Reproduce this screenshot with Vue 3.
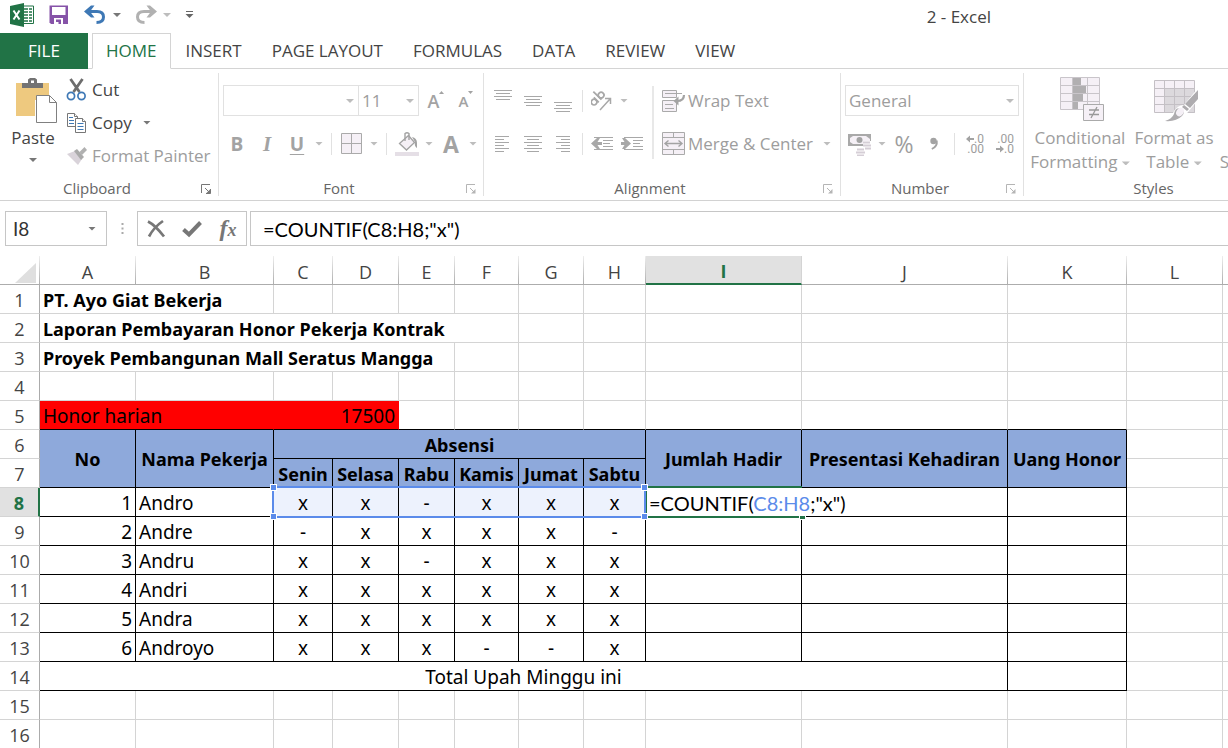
<script setup>
import { ref } from 'vue'

const tabs = ['HOME', 'INSERT', 'PAGE LAYOUT', 'FORMULAS', 'DATA', 'REVIEW', 'VIEW']
const columns = ['A', 'B', 'C', 'D', 'E', 'F', 'G', 'H', 'I', 'J', 'K', 'L', 'M']
const days = ['Senin', 'Selasa', 'Rabu', 'Kamis', 'Jumat', 'Sabtu']
const workers = [
  { row: 8, no: 1, name: 'Andro', marks: ['x', 'x', '-', 'x', 'x', 'x'] },
  { row: 9, no: 2, name: 'Andre', marks: ['-', 'x', 'x', 'x', 'x', '-'] },
  { row: 10, no: 3, name: 'Andru', marks: ['x', 'x', '-', 'x', 'x', 'x'] },
  { row: 11, no: 4, name: 'Andri', marks: ['x', 'x', 'x', 'x', 'x', 'x'] },
  { row: 12, no: 5, name: 'Andra', marks: ['x', 'x', 'x', 'x', 'x', 'x'] },
  { row: 13, no: 6, name: 'Androyo', marks: ['x', 'x', 'x', '-', '-', 'x'] },
]
const cellName = ref('I8')
const formula = ref('=COUNTIF(C8:H8;"x")')
</script>

<template>
  <div class="app">
    <header class="titlebar">
      <svg class="logo" width="24" height="24" viewBox="0 0 24 24" aria-hidden="true">
        <path d="M12 3h11.500v17.500H12z" fill="#fff" stroke="#217346" />
        <path d="M14 6h4M19 6h3M14 9h4M19 9h3M14 12h4M19 12h3M14 15h4M19 15h3M14 18h4M19 18h3" stroke="#217346" stroke-width="1.600" />
        <path d="M0 3L14 0v24L0 21z" fill="#217346" />
        <path d="M3.500 7.500l6 9M9.500 7.500l-6 9" stroke="#fff" stroke-width="2" />
      </svg>
      <button class="quick save" aria-label="Save">
        <svg width="20" height="20" viewBox="0 0 20 20"><path d="M.5.5h18.500v18.500H2L.5 17.500z" fill="#8653a8" /><path d="M3 2h13.500v8H3z" fill="#fff" /><path d="M5 13h9v6H5z" fill="#fff" /><path d="M7 14.500h5V19H9.500v-2H7z" fill="#8653a8" /></svg>
      </button>
      <button class="quick" aria-label="Undo">
        <svg width="22" height="20" viewBox="0 0 22 20"><path d="M3 6.500h10c4.500 0 6.500 2.500 6.500 5.500 0 3.500-2.500 5.500-7 5.500" fill="none" stroke="#3e78b5" stroke-width="3" /><path d="M0 6.500L7 .5h3.500L6 6.500l4.500 6H7z" fill="#3e78b5" /></svg>
      </button>
      <i class="caret dark"></i>
      <button class="quick redo" aria-label="Redo">
        <svg width="22" height="20" viewBox="0 0 22 20"><path d="M19 6.500H9C4.500 6.500 2.500 9 2.500 12c0 3.500 2.500 5.500 7 5.500" fill="none" stroke="#b1b1b1" stroke-width="3" /><path d="M22 6.500L15 .5h-3.500L16 6.500l-4.500 6H15z" fill="#b1b1b1" /></svg>
      </button>
      <i class="caret"></i>
      <button class="quick more" aria-label="Customize toolbar">
        <svg width="9" height="8" viewBox="0 0 9 8"><path d="M1 .5h7" stroke="#666" /><path d="M.5 3h8l-4 4z" fill="#666" /></svg>
      </button>
      <h1>2 - Excel</h1>
    </header>

    <nav class="tabs">
      <button class="file">FILE</button>
      <button v-for="t in tabs" :key="t" class="tab" :class="{ active: t === 'HOME' }">{{ t }}</button>
    </nav>

    <section class="ribbon">
      <div class="group clipboard">
        <div class="body split">
          <button class="paste">
            <svg width="42" height="46" viewBox="0 0 42 46"><path d="M0 5h33v17H19v16H0z" fill="#eec97f" /><path d="M6 10V5h6V1.500L14 0h5l2 1.500V5h6v5z" fill="#737373" /><path d="M15 2.500h3V5h-3z" fill="#fff" /><path d="M20.500 17.500h13l7 7v20h-20z" fill="#fff" stroke="#808080" /><path d="M33.500 17.500v7h7" fill="none" stroke="#808080" /></svg>
            <span>Paste</span><i class="caret dark"></i>
          </button>
          <div class="stack">
            <button class="cmd dark-text"><svg width="22" height="24" viewBox="0 0 22 24"><path d="M4.500 1l9 13M16.500 1l-9 13" stroke="#6d6d6d" stroke-width="2.800" /><circle cx="5" cy="18" r="3.600" fill="none" stroke="#3e78b5" stroke-width="1.700" /><circle cx="15.500" cy="18" r="3.600" fill="none" stroke="#3e78b5" stroke-width="1.700" /></svg>Cut</button>
            <button class="cmd dark-text"><svg width="22" height="22" viewBox="0 0 22 22"><g fill="#fff" stroke="#777"><path d="M1.500 1.500h7l3 3v10h-10z" /><path d="M8.500 1.500v3h3M9.500 6.500h7l3 3v11h-10z" /><path d="M16.500 6.500v3h3" /></g><path d="M3 5.500h4M3 8.500h5M3 11.500h5M11.500 11.500h6M11.500 14.500h6M11.500 17.500h6" stroke="#3e78b5" /></svg>Copy<i class="caret dark"></i></button>
            <button class="cmd"><svg width="22" height="20" viewBox="0 0 22 20"><path d="M1 8l8-3 7 8-4 6z" fill="#d9d3da" /><path d="M8 5l3-2 7 8-3 3z" fill="#aaa" /><path d="M13.500 6l5-5 2.500 3-5 5z" fill="#b1b1b1" /></svg>Format Painter</button>
          </div>
        </div>
        <footer>Clipboard<svg class="launch strong" width="11" height="11" viewBox="0 0 11 11"><path d="M.5 9V.5H9M4 4l4 4M9.500 5v4.500H5" fill="none" stroke="currentColor" /><path d="M9.500 5v4.500H5z" fill="currentColor" /></svg></footer>
      </div>

      <div class="group font">
        <div class="body rows">
          <div class="line combos">
            <label class="combo family"><select aria-label="Font name"><option></option></select><i class="caret"></i></label>
            <label class="combo size"><select aria-label="Font size"><option>11</option></select><i class="caret"></i></label>
            <button class="ib first" aria-label="Increase font size"><span class="letter grow">A</span><svg width="5" height="22" viewBox="0 0 5 22"><path d="M0 4l2.500-3L5 4z" fill="#a3a3a3" /></svg></button>
            <button class="ib" aria-label="Decrease font size"><span class="letter shrink">A</span><svg width="5" height="22" viewBox="0 0 5 22"><path d="M0 1l2.500 3L5 1z" fill="#a3a3a3" /></svg></button>
          </div>
          <div class="line">
            <button class="ib letter">B</button>
            <button class="ib letter italic">I</button>
            <button class="ib letter under">U</button>
            <button class="cr" aria-label="Underline options"><i class="caret"></i></button><i class="sep"></i>
            <button class="ib" aria-label="Borders"><svg width="22" height="22" viewBox="0 0 22 22"><path d="M.5.5h20v20H.5zM10.500.5v20M.5 10.500h20" fill="#f5f0f6" stroke="#aaa" /></svg></button>
            <button class="cr" aria-label="Border options"><i class="caret"></i></button><i class="sep"></i>
            <button class="ib" aria-label="Fill color"><svg width="24" height="24" viewBox="0 0 24 24"><path d="M4.500 11.500l9-8 6 7-8 7.500z" fill="#f5f0f6" stroke="#a3a3a3" stroke-width="1.300" /><path d="M10 9V1.500Q12 0 14 1.500V8" fill="none" stroke="#a3a3a3" stroke-width="1.400" /><path d="M17 5q5 1 5 6v5q-3-2-2-6z" fill="#a3a3a3" /><path d="M0 20h24v4H0z" fill="#e5dfe6" /></svg></button>
            <button class="cr" aria-label="Fill options"><i class="caret"></i></button>
            <button class="ib letter big">A</button>
            <button class="cr" aria-label="Font color options"><i class="caret"></i></button>
          </div>
        </div>
        <footer>Font<svg class="launch" width="11" height="11" viewBox="0 0 11 11"><path d="M.5 9V.5H9M4 4l4 4" fill="none" stroke="currentColor" /><path d="M9.500 5v4.500H5z" fill="currentColor" /></svg></footer>
      </div>

      <div class="group align">
        <div class="body split">
          <div class="rows lead">
            <div class="line">
              <button class="ib" aria-label="Top align"><svg width="20" height="24" viewBox="0 0 20 24"><path d="M1 1.500h18M3 4.500h14M1 7.500h18M3 10.500h14" /></svg></button>
              <button class="ib" aria-label="Middle align"><svg width="20" height="24" viewBox="0 0 20 24"><path d="M1 7.500h18M3 10.500h14M1 13.500h18M3 16.500h14" /></svg></button>
              <button class="ib" aria-label="Bottom align"><svg width="20" height="24" viewBox="0 0 20 24"><path d="M1 13.500h18M3 16.500h14M1 19.500h18M3 22.500h14" /></svg></button>
              <i class="sep"></i>
              <button class="ib" aria-label="Orientation"><svg width="22" height="22" viewBox="0 0 22 22"><g class="thick" transform="rotate(-45 8 10)"><circle cx="3" cy="8" r="2.800" /><path d="M6.200 4.500v7M10 0v11.500" /><circle cx="13" cy="8" r="2.800" /></g><path d="M9 20L19 9M14 8.500h5.500V14" stroke-width="1.500" /></svg></button>
              <button class="cr" aria-label="Orientation options"><i class="caret"></i></button>
            </div>
            <div class="line">
              <button class="ib" aria-label="Align left"><svg width="20" height="18" viewBox="0 0 20 18"><path d="M2 1.500h14M2 4.500h9M2 7.500h14M2 10.500h9M2 13.500h14M2 16.500h9" /></svg></button>
              <button class="ib" aria-label="Center"><svg width="20" height="18" viewBox="0 0 20 18"><path d="M1 1.500h18M4 4.500h12M1 7.500h18M4 10.500h12M1 13.500h18M4 16.500h12" /></svg></button>
              <button class="ib" aria-label="Align right"><svg width="20" height="18" viewBox="0 0 20 18"><path d="M3 1.500h14M8 4.500h9M3 7.500h14M8 10.500h9M3 13.500h14M8 16.500h9" /></svg></button>
              <i class="sep"></i>
              <button class="ib" aria-label="Decrease indent"><svg width="22" height="16" viewBox="0 0 22 16"><path d="M3 1.500h19M12 4.500h10M12 7.500h7M12 10.500h10M3 13.500h19" /><path d="M0 7.500L6 2h3L6.500 6H11v3H6.500L9 13H6z" fill="#a8a8a8" stroke="none" /></svg></button>
              <button class="ib" aria-label="Increase indent"><svg width="22" height="16" viewBox="0 0 22 16"><path d="M3 1.500h19M12 4.500h10M12 7.500h7M12 10.500h10M3 13.500h19" /><path d="M10 7.500L4 2H1l2.500 4H0v3h3.500L1 13h3z" fill="#a8a8a8" stroke="none" /></svg></button>
            </div>
          </div>
          <i class="tall"></i>
          <div class="rows">
            <button class="cmd line"><svg width="24" height="24" viewBox="0 0 24 24"><path d="M.5 1.500h14v7h-14zM.5 11.500h14v11h-14z" fill="#f5f0f6" stroke="#aaa" /><path d="M3 4.500h17M3 15.500h8M3 19.500h9" stroke="#aaa" /><path d="M22 6q0 6-7 6" stroke="#a3a3a3" stroke-width="2.200" /><path d="M11.500 12l5-4.500v9z" fill="#a3a3a3" stroke="none" /></svg>Wrap Text</button>
            <button class="cmd line"><svg width="24" height="24" viewBox="0 0 24 24"><path d="M.5.5h22v22H.5zM.5 5.500h22M.5 17.500h22M11.500.5v5M11.500 17.500v5" fill="#f5f0f6" stroke="#aaa" /><path d="M3 11.500h17M6.500 8.500l-3.500 3 3.500 3M16.500 8.500l3.500 3-3.500 3" stroke="#a3a3a3" stroke-width="1.400" /></svg>Merge &amp; Center<i class="caret"></i></button>
          </div>
        </div>
        <footer>Alignment<svg class="launch" width="11" height="11" viewBox="0 0 11 11"><path d="M.5 9V.5H9M4 4l4 4" fill="none" stroke="currentColor" /><path d="M9.500 5v4.500H5z" fill="currentColor" /></svg></footer>
      </div>

      <div class="group number">
        <div class="body rows">
          <div class="line combos">
            <label class="combo wide"><select aria-label="Number format"><option>General</option></select><i class="caret"></i></label>
          </div>
          <div class="line">
            <button class="ib" aria-label="Accounting format"><svg width="24" height="24" viewBox="0 0 24 24"><path d="M0 2h23v12H0z" fill="#a9a9a9" /><path d="M5 4h13l4 3v3l-3 2H5L2 10V6z" fill="#f5f0f6" /><circle cx="11.500" cy="8" r="3" fill="#a3a3a3" /><path d="M15 9h8v9h-8zM8 16h10v8H8z" fill="#fff" /><path d="M15 10.500h7M15 13.500h8M17 16.500h6M9 17.500h7M8 20.500h9M9 23.500h7" stroke="#d5ced6" stroke-width="2" /></svg></button>
            <button class="cr" aria-label="Accounting options"><i class="caret"></i></button>
            <button class="ib percent">%</button>
            <button class="ib" aria-label="Comma style"><svg width="10" height="14" viewBox="0 0 10 14"><circle cx="4.500" cy="4" r="3.200" fill="#a3a3a3" /><path d="M7.800 3.500q.8 6-5 8.500" fill="none" stroke="#a3a3a3" stroke-width="1.800" /></svg></button>
            <i class="sep"></i>
            <button class="ib dec" aria-label="Increase decimal"><span><svg width="8" height="8" viewBox="0 0 8 8"><path d="M0 4l4-3.500V3h4v2H4v2.500z" fill="#a3a3a3" /></svg>.0</span><span>.00</span></button>
            <button class="ib dec" aria-label="Decrease decimal"><span>.00</span><span><svg width="8" height="8" viewBox="0 0 8 8"><path d="M8 4L4 .5V3H0v2h4v2.500z" fill="#a3a3a3" /></svg>.0</span></button>
          </div>
        </div>
        <footer>Number<svg class="launch" width="11" height="11" viewBox="0 0 11 11"><path d="M.5 9V.5H9M4 4l4 4" fill="none" stroke="currentColor" /><path d="M9.500 5v4.500H5z" fill="currentColor" /></svg></footer>
      </div>

      <div class="group styles">
        <div class="body split">
          <button class="large cond">
            <svg width="44" height="46" viewBox="0 0 44 46"><path d="M.5.5h39v32H.5z" fill="#f5f0f6" /><path d="M13 1h8v7h-8zM13 9h13v7H13zM13 17h10v7H13zM13 25h5v8h-5z" fill="#b1afb1" /><path d="M.5.5h39v32H.5zM12.500.5v32M27.500.5v32M.5 8.500h39M.5 16.500h39M.5 24.500h39" fill="none" stroke="#c9c5ca" /><path d="M23.500 27.500h20v16h-20z" fill="#f5f0f6" stroke="#aaa" /><path d="M29 33h10M29 37.500h10M37 30l-6 11" stroke="#999" stroke-width="1.300" /></svg>
            <span>Conditional<br>Formatting <i class="caret"></i></span>
          </button>
          <button class="large fmt">
            <svg width="44" height="46" viewBox="0 0 44 46"><path d="M.5 3.500h40v32H.5z" fill="#f5f0f6" /><path d="M11 12h30v24H11z" fill="#dcd9dd" /><path d="M.5 3.500h40v32H.5zM10.500 3.500v32M20.500 3.500v32M30.500 3.500v32M.5 11.500h40M.5 19.500h40M.5 27.500h40" fill="none" stroke="#c4c0c5" /><path d="M44 11v12L29 41q-4 6-19 4 6-3 9-9 4-8 11-8z" fill="#fff" /><path d="M44 13v9l-8 9-5-4zM30 28l5 4-2 2-5-4z" fill="#aeacaf" /><path d="M20 37q1-7 7-6 5 4 1 8-6 6-17 5 7-2 9-7z" fill="#aeacaf" /><ellipse cx="26" cy="35" rx="3.500" ry="4.500" transform="rotate(35 26 35)" fill="#f5f0f6" /></svg>
            <span>Format as<br>Table <i class="caret"></i></span>
          </button>
          <button class="large cells">
            <span>Styles <i class="caret"></i></span>
          </button>
        </div>
        <footer>Styles</footer>
      </div>
    </section>

    <section class="formula-bar">
      <div class="namebox"><input v-model="cellName" aria-label="Name box"><i class="caret dark"></i></div>
      <svg class="dots" width="3" height="13" viewBox="0 0 3 13"><path d="M.5 1h2v2h-2zM.5 5.500h2v2h-2zM.5 10h2v2h-2z" fill="#aaa" /></svg>
      <div class="actions">
        <button aria-label="Cancel"><svg width="20" height="20" viewBox="0 0 20 20"><path d="M2 2.500Q9 6 18 17.500M17 2Q8 8 3 17.500" fill="none" stroke="#777" stroke-width="2.700" /></svg></button>
        <button aria-label="Enter"><svg width="20" height="20" viewBox="0 0 20 20"><path d="M1.500 10.500l5.500 5L18.500 3.500" fill="none" stroke="#777" stroke-width="4" /></svg></button>
        <button class="fx" aria-label="Insert function"><i>f</i><i class="x">x</i></button>
      </div>
      <input v-model="formula" class="formula" aria-label="Formula">
    </section>

    <main class="sheet">
      <table>
        <colgroup>
          <col class="c-head"><col v-for="c in columns" :key="c" :class="'c-' + c">
        </colgroup>
        <thead>
          <tr>
            <th class="corner"><svg width="21" height="20" viewBox="0 0 21 20"><path d="M21 0v20H0z" fill="#dfdfdf" /></svg></th>
            <th v-for="c in columns" :key="c" :class="{ on: c === 'I' }">{{ c === 'M' ? '' : c }}</th>
          </tr>
        </thead>
        <tbody>
          <tr><th>1</th><td colspan="2" class="bold">PT. Ayo Giat Bekerja</td><td v-for="n in 11" :key="n"></td></tr>
          <tr><th>2</th><td colspan="6" class="bold">Laporan Pembayaran Honor Pekerja Kontrak</td><td v-for="n in 7" :key="n"></td></tr>
          <tr><th>3</th><td colspan="5" class="bold">Proyek Pembangunan Mall Seratus Mangga</td><td v-for="n in 8" :key="n"></td></tr>
          <tr><th>4</th><td v-for="n in 13" :key="n"></td></tr>
          <tr>
            <th>5</th><td colspan="2" class="red">Honor harian</td><td colspan="2" class="red right">17500</td>
            <td v-for="n in 7" :key="n" class="edge"></td><td></td><td></td>
          </tr>
          <tr>
            <th>6</th><td rowspan="2" class="blue">No</td><td rowspan="2" class="blue">Nama Pekerja</td>
            <td colspan="6" class="blue">Absensi</td>
            <td rowspan="2" class="blue">Jumlah Hadir</td><td rowspan="2" class="blue">Presentasi Kehadiran</td><td rowspan="2" class="blue">Uang Honor</td>
            <td></td><td></td>
          </tr>
          <tr><th>7</th><td v-for="d in days" :key="d" class="blue">{{ d }}</td><td></td><td></td></tr>
          <tr v-for="w in workers" :key="w.row">
            <th :class="{ on: w.row === 8 }">{{ w.row }}</th>
            <td class="box right">{{ w.no }}</td>
            <td class="box">{{ w.name }}</td>
            <td v-for="(m, i) in w.marks" :key="i" class="box mark" :class="{ picked: w.row === 8 }">
              {{ m }}<div v-if="w.row === 8 && i === 0" class="range"><b></b><b></b><b></b><b></b></div>
            </td>
            <td v-if="w.row === 8" class="box editing"><div class="editor">=COUNTIF(<span>C8:H8</span>;"x")</div><div class="cursor"><b></b></div></td>
            <td v-else class="box"></td>
            <td class="box"></td><td class="box"></td><td></td><td></td>
          </tr>
          <tr><th>14</th><td colspan="10" class="box mark">Total Upah Minggu ini</td><td class="box"></td><td></td><td></td></tr>
          <tr v-for="r in [15, 16]" :key="r"><th>{{ r }}</th><td v-for="n in 13" :key="n"></td></tr>
        </tbody>
      </table>
    </main>
  </div>
</template>

<style>
body { margin: 0; overflow: hidden; background: #fff; }
</style>

<style scoped>
* { box-sizing: border-box; }
.app { height: 100vh; overflow: hidden; display: flex; flex-direction: column; background: #fff; color: #444; font: 17px/24px "Open Sans", "Noto Sans", sans-serif; }
button, input, select { font: inherit; color: inherit; margin: 0; padding: 0; border: 0; background: none; border-radius: 0; outline: 0; }
button { white-space: nowrap; }
svg { display: block; flex: none; }

.caret { display: block; flex: none; width: 8px; height: 4px; background: #bdbdbd; clip-path: polygon(0 0, 100% 0, 50% 100%); }
.caret.dark { background: #777; }

.titlebar { flex: none; height: 33px; display: flex; align-items: center; padding: 0 237px 3px 10px; }
.quick { display: flex; margin-left: 20px; }
.quick.save { margin-left: 15px; }
.quick.save + .quick { margin-left: 15px; margin-right: 7px; }
.quick.redo { margin-left: 14px; margin-right: 6px; }
.quick.more { margin-left: 14px; }
h1 { margin: 0 0 0 auto; font-size: 17px; font-weight: 400; line-height: 28px; padding-top: 3px; }

.tabs { flex: none; display: flex; height: 36px; padding-right: 4px; background: linear-gradient(#d4d4d4, #d4d4d4) bottom / 100% 1px no-repeat; }
.file { width: 88px; margin-right: 4px; background: #217346; color: #fff; }
.tab { padding: 0 14px; border: 1px solid transparent; }
.tab.active { color: #217346; background: #fff; border-color: #d4d4d4; border-bottom-color: #fff; padding: 0 13px; }

.ribbon { flex: none; display: flex; height: 132px; padding: 4px 0; border-bottom: 1px solid #d2d2d2; overflow: hidden; color: #9d9d9d; }
.group { flex: none; display: flex; flex-direction: column; border-right: 1px solid #e1e1e1; }
.body { flex: 1; }
.split { display: flex; }
.stack { display: flex; flex-direction: column; }
.stack .cmd { height: 33px; }
.cmd { display: flex; align-items: center; gap: 4px; }
.cmd .caret { margin-left: 7px; }
.dark-text, .paste { color: #444; }
.rows { display: flex; flex-direction: column; gap: 12px; padding-top: 12px; }
.line { display: flex; align-items: center; height: 31px; }
.ib { width: 30px; height: 30px; display: flex; align-items: center; justify-content: center; }
.cr { width: 14px; height: 30px; display: flex; align-items: center; justify-content: center; }
.sep { width: 1px; height: 22px; margin: 0 5px; background: #e1e1e1; }
.tall { width: 2px; height: 73px; margin: 13px 8px 0 5px; background: #e8e8e8; }
.group footer { position: relative; height: 16px; line-height: 16px; font-size: 15px; color: #666; text-align: center; }
.launch { position: absolute; right: 6px; top: 4px; color: #b5b5b5; }
.launch.strong { color: #777; }

.clipboard { width: 219px; }
.clipboard footer, .font footer, .align footer, .number footer { padding-right: 24px; }
.paste { width: 66px; display: flex; flex-direction: column; align-items: center; padding-top: 5px; }
.paste svg { margin-left: 8px; }
.paste span { margin: 2px 0 8px; }

.font { width: 265px; }
.font .rows { padding-left: 3px; }
.combos { padding-left: 1px; }
.combo { position: relative; height: 31px; display: flex; border: 1px solid #e1e1e1; }
.combo select { width: 100%; appearance: none; padding-left: 3px; font-size: 17px; }
.combo .caret { position: absolute; right: 4px; top: 13px; }
.family { width: 136px; }
.size { width: 60px; border-left: 0; }
.first { margin-left: 2px; }
.letter { font-weight: 700; font-size: 19px; color: #a3a3a3; }
.grow { font-size: 18px; font-weight: 600; }
.shrink { font-size: 15px; font-weight: 600; }
.big { font-size: 23px; }
.italic { font-family: "Liberation Serif", serif; font-style: italic; font-size: 21px; }
.under { text-decoration: underline; text-underline-offset: 3px; text-decoration-thickness: 1px; }

.align { width: 357px; }
.align .cmd { gap: 2px; }
.align .cmd .caret { margin-left: 8px; }
.lead { padding-left: 4px; }
.lead .sep { margin: 0 4px; }
.lead svg { fill: none; stroke: #a8a8a8; }
.thick { stroke-width: 1.8; }
.align .cmd svg { fill: none; }

.number { width: 183px; }
.number .rows { padding-left: 4px; }
.number .combos { padding-left: 0; }
.wide { width: 174px; }
.percent { font-size: 23px; }
.dec { flex-direction: column; align-items: flex-end; padding-right: 6px; font: 12px/10px Roboto, sans-serif; }
.dec span { display: flex; align-items: center; }

.styles { width: 259px; border-right: 0; }
.styles .body { padding-left: 4px; }
.large { display: flex; flex-direction: column; align-items: center; padding-top: 4px; }
.large span { margin-top: 3px; }
.large .caret { display: inline-block; vertical-align: middle; }
.cond { width: 104px; }
.fmt { width: 84px; }
.cond svg, .fmt svg { margin-left: 4px; }
.cells { width: 66px; padding-top: 74px; }

.formula-bar { flex: none; display: flex; align-items: center; height: 55px; padding: 0 0 0 5px; color: #333; font: 20px/24px Lato, "Open Sans", sans-serif; }
.namebox { width: 102px; height: 35px; display: flex; align-items: center; border: 1px solid #c6c6c6; }
.namebox input { flex: 1; min-width: 0; padding-left: 7px; font-size: 19px; }
.namebox .caret { margin-right: 10px; }
.dots { margin: 0 13px 0 14px; }
.actions { width: 110px; height: 35px; display: flex; align-items: center; justify-content: space-around; border: 1px solid #c6c6c6; }
.actions button { width: 36px; display: flex; justify-content: center; }
.fx { font: italic 700 24px/28px "Liberation Serif", serif; color: #777; align-items: baseline; }
.fx .x { font-size: 18px; }
.formula { flex: 1; height: 35px; margin-left: 3px; padding-left: 12px; border: 1px solid #c6c6c6; border-right: 0; color: #000; }

.sheet { flex: 1; min-height: 0; overflow: hidden; color: #000; font: 19px/24px "Noto Sans", "Open Sans", sans-serif; }
table { width: 100%; table-layout: fixed; border-collapse: separate; border-spacing: 0; }
.c-head { width: 40px; } .c-A { width: 96px; } .c-B { width: 138px; } .c-C { width: 59px; }
.c-D { width: 66px; } .c-E { width: 56px; } .c-F { width: 64px; } .c-G { width: 65px; }
.c-H { width: 62px; } .c-I { width: 156px; } .c-J { width: 206px; } .c-K { width: 119px; } .c-L { width: 96px; }
tr { height: 29px; }
th, td { padding: 1px 3px 0; border-right: 1px solid #d4d4d4; border-bottom: 1px solid #d4d4d4; height: 29px; line-height: 24px; white-space: nowrap; text-align: left; }
th { font: 18px/24px "Open Sans", sans-serif; color: #444; text-align: center; padding: 1px 0 0; }
thead th { border-bottom-color: #ababab; padding-top: 3px; border-image: linear-gradient(#f0f0f0, #ababab) 1; border-image-width: 0 1px 1px 0; }
tbody th { border-right-color: #ababab; }
tr > :last-child { border-right: 0; border-image: none; }
thead .corner { padding: 5px 0 0 15px; }
th.on { background: #e1e1e1; color: #217346; font-weight: 700; }
thead th.on { border-image: none; border-bottom: 2px solid #217346; }
tbody th.on { border-right: 2px solid #217346; }
.bold { font-size: 18px; font-weight: 700; }
.right { text-align: right; }
.red { background: #f00; border-color: #f00; border-bottom-color: #000; }
.edge { border-bottom-color: #000; }
.blue { background: #8ea9db; font-size: 18px; font-weight: 700; text-align: center; border-color: #000; padding: 1px 0 0; }
.box { border-color: #000; }
.mark { text-align: center; }
.picked { background: #edf2fd; }
.picked, .editing { position: relative; }
.range { position: absolute; z-index: 2; left: -2px; top: -2px; width: 374px; height: 32px; border: 2px solid #5b8bea; }
.range b { position: absolute; width: 7px; height: 7px; background: #5b8bea; border: 1px solid #fff; }
.range b:nth-child(1) { left: -4px; top: -4px; }
.range b:nth-child(2) { right: -4px; top: -4px; }
.range b:nth-child(3) { left: -4px; bottom: -4px; }
.range b:nth-child(4) { right: -4px; bottom: -4px; }
.cursor { position: absolute; z-index: 1; left: -1px; right: -1px; top: -2px; bottom: -2px; border: 2px solid #217346; border-right: 0; }
.cursor b { position: absolute; right: -4px; bottom: -4px; width: 7px; height: 6px; background: #217346; border: 1px solid #fff; }
.editor { position: absolute; z-index: 2; left: 1px; top: 0; height: 28px; line-height: 30px; padding: 0 2px; background: #fff; font-family: Lato, sans-serif; font-size: 20px; }
.editor span { color: #5b8bea; }
</style>
